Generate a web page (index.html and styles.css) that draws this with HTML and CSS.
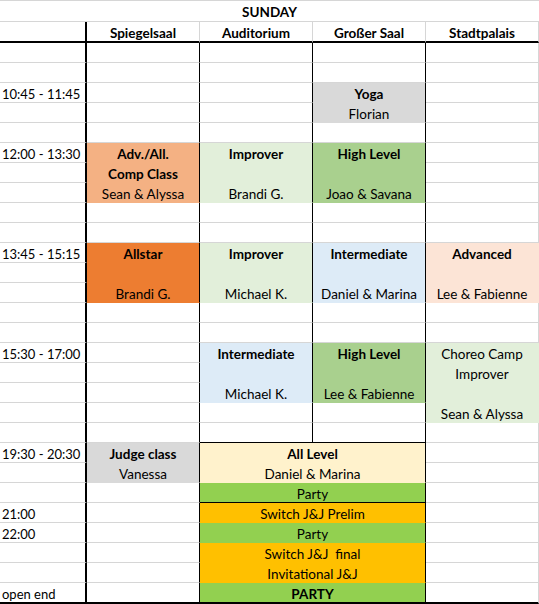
FILE: index.html
```html
<!DOCTYPE html>
<html lang="de">
<head>
<meta charset="utf-8">
<title>Sunday schedule</title>
<link rel="stylesheet" href="styles.css">
</head>
<body>
<div class="sheet">
  <div class="title c5"><div class="ln b">SUNDAY</div></div>

  <div class="hd t"></div>
  <div class="hd"><div class="ln b">Spiegelsaal</div></div>
  <div class="hd"><div class="ln b">Auditorium</div></div>
  <div class="hd"><div class="ln b">Großer Saal</div></div>
  <div class="hd"><div class="ln b">Stadtpalais</div></div>

  <!-- row 1 -->
  <div class="t"></div><div class="s"></div><div class="a"></div><div class="g"></div><div class="p"></div>
  <!-- row 2 -->
  <div class="t"></div><div class="s"></div><div class="a"></div><div class="g"></div><div class="p"></div>
  <!-- row 3 -->
  <div class="t"><div class="ln">10:45 - 11:45</div></div><div class="s"></div><div class="a"></div>
  <div class="g r2 fill gray"><div class="ln b">Yoga</div><div class="ln">Florian</div></div>
  <div class="p"></div>
  <!-- row 4 -->
  <div class="t"></div><div class="s"></div><div class="a"></div><div class="p"></div>
  <!-- row 5 -->
  <div class="t"></div><div class="s"></div><div class="a"></div><div class="g"></div><div class="p"></div>
  <!-- row 6 -->
  <div class="t"><div class="ln">12:00 - 13:30</div></div>
  <div class="s r3 fill orange-l"><div class="ln b">Adv./All.</div><div class="ln b">Comp Class</div><div class="ln">Sean &amp; Alyssa</div></div>
  <div class="a r3 fill green-l"><div class="ln b">Improver</div><div class="ln"></div><div class="ln">Brandi G.</div></div>
  <div class="g r3 fill green-m"><div class="ln b">High Level</div><div class="ln"></div><div class="ln">Joao &amp; Savana</div></div>
  <div class="p"></div>
  <!-- row 7 -->
  <div class="t"></div><div class="p"></div>
  <!-- row 8 -->
  <div class="t"></div><div class="p"></div>
  <!-- row 9 -->
  <div class="t"></div><div class="s"></div><div class="a"></div><div class="g"></div><div class="p"></div>
  <!-- row 10 -->
  <div class="t"></div><div class="s"></div><div class="a"></div><div class="g"></div><div class="p"></div>
  <!-- row 11 -->
  <div class="t"><div class="ln">13:45 - 15:15</div></div>
  <div class="s r3 fill orange"><div class="ln b">Allstar</div><div class="ln"></div><div class="ln">Brandi G.</div></div>
  <div class="a r3 fill green-l"><div class="ln b">Improver</div><div class="ln"></div><div class="ln">Michael K.</div></div>
  <div class="g r3 fill blue-l"><div class="ln b">Intermediate</div><div class="ln"></div><div class="ln">Daniel &amp; Marina</div></div>
  <div class="p r3 fill peach"><div class="ln b">Advanced</div><div class="ln"></div><div class="ln">Lee &amp; Fabienne</div></div>
  <!-- row 12 -->
  <div class="t"></div>
  <!-- row 13 -->
  <div class="t"></div>
  <!-- row 14 -->
  <div class="t"></div><div class="s"></div><div class="a"></div><div class="g"></div><div class="p"></div>
  <!-- row 15 -->
  <div class="t"></div><div class="s"></div><div class="a"></div><div class="g"></div><div class="p"></div>
  <!-- row 16 -->
  <div class="t"><div class="ln">15:30 - 17:00</div></div>
  <div class="s"></div>
  <div class="a r3 fill blue-l"><div class="ln b">Intermediate</div><div class="ln"></div><div class="ln">Michael K.</div></div>
  <div class="g r3 fill green-m"><div class="ln b">High Level</div><div class="ln"></div><div class="ln">Lee &amp; Fabienne</div></div>
  <div class="p r4 fill green-l"><div class="ln">Choreo Camp</div><div class="ln">Improver</div><div class="ln"></div><div class="ln">Sean &amp; Alyssa</div></div>
  <!-- row 17 -->
  <div class="t"></div><div class="s"></div>
  <!-- row 18 -->
  <div class="t"></div><div class="s"></div>
  <!-- row 19 -->
  <div class="t"></div><div class="s"></div><div class="a"></div><div class="g"></div>
  <!-- row 20 -->
  <div class="t"></div><div class="s"></div><div class="a edge"></div><div class="g edge"></div><div class="p"></div>
  <!-- row 21 -->
  <div class="t"><div class="ln">19:30 - 20:30</div></div>
  <div class="s r2 fill gray"><div class="ln b">Judge class</div><div class="ln">Vanessa</div></div>
  <div class="m r2 fill cream"><div class="ln b">All Level</div><div class="ln">Daniel &amp; Marina</div></div>
  <div class="p"></div>
  <!-- row 22 -->
  <div class="t"></div><div class="p"></div>
  <!-- row 23 -->
  <div class="t"></div><div class="s"></div>
  <div class="m fill party edge"><div class="ln">Party</div></div>
  <div class="p"></div>
  <!-- row 24 -->
  <div class="t"><div class="ln">21:00</div></div><div class="s"></div>
  <div class="m fill gold"><div class="ln">Switch J&amp;J Prelim</div></div>
  <div class="p"></div>
  <!-- row 25 -->
  <div class="t"><div class="ln">22:00</div></div><div class="s"></div>
  <div class="m fill party"><div class="ln">Party</div></div>
  <div class="p"></div>
  <!-- row 26 -->
  <div class="t"></div><div class="s"></div>
  <div class="m r2 fill gold"><div class="ln">Switch J&amp;J&nbsp; final</div><div class="ln">Invitational J&amp;J</div></div>
  <div class="p"></div>
  <!-- row 27 -->
  <div class="t"></div><div class="s"></div><div class="p"></div>
  <!-- row 28 -->
  <div class="t last"><div class="ln">open end</div></div><div class="s last"></div>
  <div class="m fill party last"><div class="ln b">PARTY</div></div>
  <div class="p last"></div>
</div>
</body>
</html>
```

FILE: styles.css
```css
html, body {
  margin: 0;
  padding: 0;
  background: #ffffff;
}

body {
  font-family: Lato, "Open Sans", sans-serif;
  font-size: 13.5px;
  color: #000000;
}

.sheet {
  display: grid;
  grid-template-columns: 87px 113px 113px 113px 113px;
  grid-template-rows: 22px 21px repeat(27, 20px) 21px;
  width: 539px;
}

.sheet > div {
  box-sizing: border-box;
  border-bottom: 1px solid #d6d6d6;
  border-right: 1px solid #d6d6d6;
  text-align: center;
  display: flex;
  flex-direction: column;
  min-width: 0;
}

.ln {
  height: 20px;
  line-height: 22px;
  white-space: nowrap;
  flex: none;
}

.b { font-weight: 700; }

.c5 { grid-column: span 5; }
.r2 { grid-row: span 2; }
.r3 { grid-row: span 3; }
.r4 { grid-row: span 4; }

.sheet > .title {
  border-top: 1px solid #d6d6d6;
  border-right: none;
}

.sheet > .hd {
  border-bottom: 2px solid #000;
}

.sheet > .t {
  border-right: 2px solid #000;
  text-align: left;
  padding-left: 2px;
  font-size: 13px;
}

.sheet > .s,
.sheet > .a,
.sheet > .g,
.sheet > .m {
  border-right-color: #000;
}

.sheet > .m { grid-column: span 2; }

.sheet > .edge { border-bottom-color: #000; }

.sheet > .fill { border-bottom-color: transparent; }
.sheet > .fill.edge { border-bottom-color: #000; }

.sheet > .p.fill { border-right-color: transparent; }

.sheet > .last {
  border-bottom: 2px solid #000;
}
.sheet > .fill.last { border-bottom-color: #000; }

.gray { background: #d9d9d9; }
.orange-l { background: #f4b183; }
.orange { background: #ed7d31; }
.green-l { background: #e2efda; }
.green-m { background: #a9d08e; }
.blue-l { background: #ddebf7; }
.peach { background: #fce4d6; }
.cream { background: #fff2cc; }
.party { background: #92d050; }
.gold { background: #ffc000; }
```
